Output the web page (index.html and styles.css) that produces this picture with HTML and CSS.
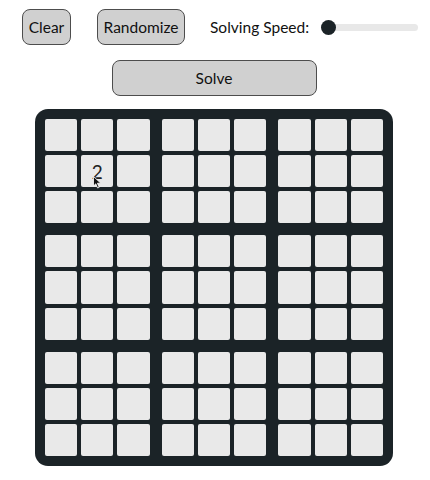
FILE: index.html
```html
<!DOCTYPE html>
<html lang="en">
<head>
    <meta charset="UTF-8">
    <meta name="viewport" content="width=device-width, initial-scale=1.0">
    <title>Sudoku Solver</title>
    <link rel="stylesheet" href="styles.css">
</head>
<body>
    <div class="app">
        <!-- Controls -->
        <div class="controls">
            <button class="btn btn-clear">Clear</button>
            <button class="btn btn-random">Randomize</button>
            <label class="speed-label" for="speed">Solving Speed:</label>
            <input type="range" id="speed" class="speed" min="0" max="100" value="0">
        </div>
        <button class="btn btn-solve">Solve</button>

        <!-- Board -->
        <div class="board" id="board"></div>
    </div>

    <script>
        const board = document.getElementById('board');
        const cursor = '<svg class="cursor" width="9" height="13" viewBox="0 0 9 13">' +
            '<path d="M0.5 0.5 L0.5 10 L2.8 7.8 L4.6 12 L6.2 11.3 L4.4 7.2 L7.8 7.2 Z" fill="#111" stroke="#fff" stroke-width="0.8"/></svg>';
        for (let b = 0; b < 9; b++) {
            const box = document.createElement('div');
            box.className = 'box';
            for (let c = 0; c < 9; c++) {
                const cell = document.createElement('div');
                cell.className = 'cell';
                if (b === 0 && c === 4) {
                    cell.innerHTML = '2' + cursor;
                }
                box.appendChild(cell);
            }
            board.appendChild(box);
        }
    </script>
</body>
</html>
```

FILE: styles.css
```css
body {
    margin: 0;
    font-family: Lato, "Noto Sans", sans-serif;
    background-color: #ffffff;
    color: #111;
}

.app {
    width: 430px;
    display: flex;
    flex-direction: column;
    align-items: center;
}

.controls {
    align-self: stretch;
    display: flex;
    align-items: center;
    padding: 9px 0 0 22px;
    height: 36px;
}

.btn {
    height: 36px;
    padding: 0 4px;
    background-color: #d0d0d0;
    border: 1.5px solid #4d4d4d;
    border-radius: 8px;
    font-family: inherit;
    font-size: 15.5px;
    color: #111;
    cursor: pointer;
}

.btn-clear {
    width: 49px;
}

.btn-random {
    width: 88px;
    margin-left: 26px;
}

.speed-label {
    margin-left: 25px;
    font-size: 15.5px;
    white-space: nowrap;
}

.speed {
    -webkit-appearance: none;
    appearance: none;
    margin: 0 0 0 12px;
    width: 97px;
    height: 7px;
    border-radius: 4px;
    background: #e8e8e8;
    outline: none;
}

.speed::-webkit-slider-thumb {
    -webkit-appearance: none;
    appearance: none;
    width: 15px;
    height: 15px;
    border-radius: 50%;
    background: #1b2327;
    cursor: pointer;
}

.btn-solve {
    width: 205px;
    margin-top: 15px;
    margin-left: -2px;
}

.board {
    margin-top: 13px;
    margin-left: -2px;
    width: 338px;
    height: 337px;
    padding: 10px;
    background-color: #1b2327;
    border-radius: 13px;
    display: grid;
    grid-template-columns: repeat(3, 1fr);
    grid-template-rows: repeat(3, 1fr);
    gap: 12px;
}

.box {
    display: grid;
    grid-template-columns: repeat(3, 1fr);
    grid-template-rows: repeat(3, 1fr);
    gap: 4px;
}

.cell {
    background-color: #e9e9e9;
    border-radius: 2px;
    display: flex;
    justify-content: center;
    align-items: center;
    font-size: 19px;
    font-weight: 400;
    color: #222;
    position: relative;
}

/* mouse pointer sitting over the cell */
.cursor {
    position: absolute;
    left: 12px;
    top: 21px;
}
```
